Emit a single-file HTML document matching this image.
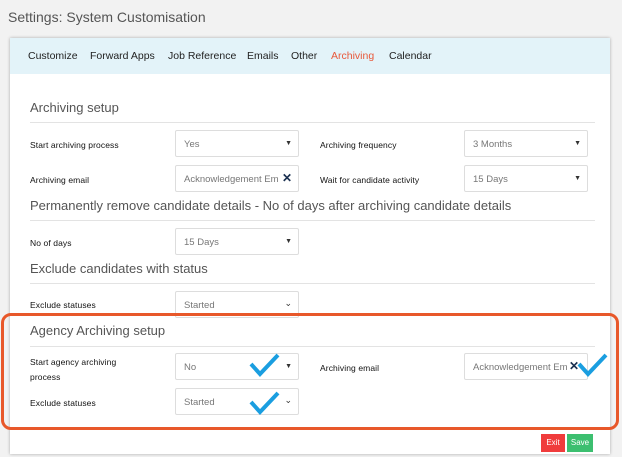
<!DOCTYPE html>
<html><head><style>
body{margin:0;width:622px;height:457px;background:#f2f2f2;font-family:"Liberation Sans",sans-serif;position:relative;overflow:hidden}
.a{position:absolute}
.title{left:8px;top:9px;font-size:14px;color:#555}
.panel{left:10px;top:38px;width:600px;height:416px;background:#fff;box-shadow:0 0 3px rgba(0,0,0,.3)}
.nav{left:10px;top:38px;width:600px;height:36px;background:#e3f3f9}
.nav span{position:absolute;top:12px;font-size:10.5px;color:#222}
.h{font-size:13px;color:#555;left:30px}
.line{left:30px;width:565px;height:1px;background:#e3e3e3}
.lb{font-size:8.5px;color:#111;left:30px;letter-spacing:.1px}
.sel{width:124px;height:27px;border:1px solid #ddd;border-radius:2px;box-sizing:border-box;font-size:9.5px;color:#777;padding:8px 0 0 8px}
.sel i{position:absolute;right:6px;top:9px;font-style:normal;font-size:7px;color:#333}
.chk{position:absolute}
</style></head><body>
<div class="a title">Settings: System Customisation</div>
<div class="a panel"></div>
<div class="a nav">
<span style="left:18px">Customize</span><span style="left:80px">Forward Apps</span><span style="left:158px">Job Reference</span><span style="left:237px">Emails</span><span style="left:281px">Other</span><span style="left:321px;color:#e8583a">Archiving</span><span style="left:379px">Calendar</span>
</div>
<div class="a h" style="top:100px">Archiving setup</div>
<div class="a line" style="top:122px"></div>
<div class="a lb" style="top:140px">Start archiving process</div>
<div class="a sel" style="left:175px;top:130px">Yes<i>▼</i></div>
<div class="a lb" style="left:320px;top:140px">Archiving frequency</div>
<div class="a sel" style="left:464px;top:130px">3 Months<i>▼</i></div>
<div class="a lb" style="top:175px">Archiving email</div>
<div class="a sel" style="left:175px;top:165px">Acknowledgement Em<b style="color:#1a3050;font-size:12px;position:absolute;right:6px;top:5px">✕</b></div>
<div class="a lb" style="left:320px;top:175px">Wait for candidate activity</div>
<div class="a sel" style="left:464px;top:165px">15 Days<i>▼</i></div>
<div class="a h" style="top:198px">Permanently remove candidate details - No of days after archiving candidate details</div>
<div class="a line" style="top:220px"></div>
<div class="a lb" style="top:238px">No of days</div>
<div class="a sel" style="left:175px;top:228px">15 Days<i>▼</i></div>
<div class="a h" style="top:261px">Exclude candidates with status</div>
<div class="a line" style="top:283px"></div>
<div class="a lb" style="top:300px">Exclude statuses</div>
<div class="a sel" style="left:175px;top:291px">Started<i style="font-size:9px;top:6px">⌄</i></div>
<div class="a" style="left:1px;top:313px;width:618px;height:117px;border:3px solid #e8582a;border-radius:10px;box-sizing:border-box"></div>
<div class="a h" style="top:323px">Agency Archiving setup</div>
<div class="a line" style="top:346px"></div>
<div class="a lb" style="top:355px;line-height:15px">Start agency archiving<br>process</div>
<div class="a sel" style="left:175px;top:353px">No<i>▼</i></div>
<div class="a lb" style="left:320px;top:363px">Archiving email</div>
<div class="a sel" style="left:464px;top:353px">Acknowledgement Em<b style="color:#1a3050;font-size:12px;position:absolute;right:8px;top:5px">✕</b></div>
<div class="a lb" style="top:398px">Exclude statuses</div>
<div class="a sel" style="left:175px;top:388px">Started<i style="font-size:9px;top:6px">⌄</i></div>
<svg class="chk" style="left:248px;top:352px" width="34" height="26"><path d="M3 12 L12 22 L30 3" fill="none" stroke="#1a9ee0" stroke-width="4"/></svg>
<svg class="chk" style="left:576px;top:352px" width="34" height="26"><path d="M3 12 L12 22 L30 3" fill="none" stroke="#1a9ee0" stroke-width="4"/></svg>
<svg class="chk" style="left:248px;top:390px" width="34" height="26"><path d="M3 12 L12 22 L30 3" fill="none" stroke="#1a9ee0" stroke-width="4"/></svg>
<div class="a" style="left:541px;top:434px;width:24px;height:18px;background:#f03c3c;color:#fff;font-size:8px;text-align:center;line-height:18px">Exit</div>
<div class="a" style="left:567px;top:434px;width:26px;height:18px;background:#3cbf70;color:#fff;font-size:8px;text-align:center;line-height:18px">Save</div>
</body></html>
